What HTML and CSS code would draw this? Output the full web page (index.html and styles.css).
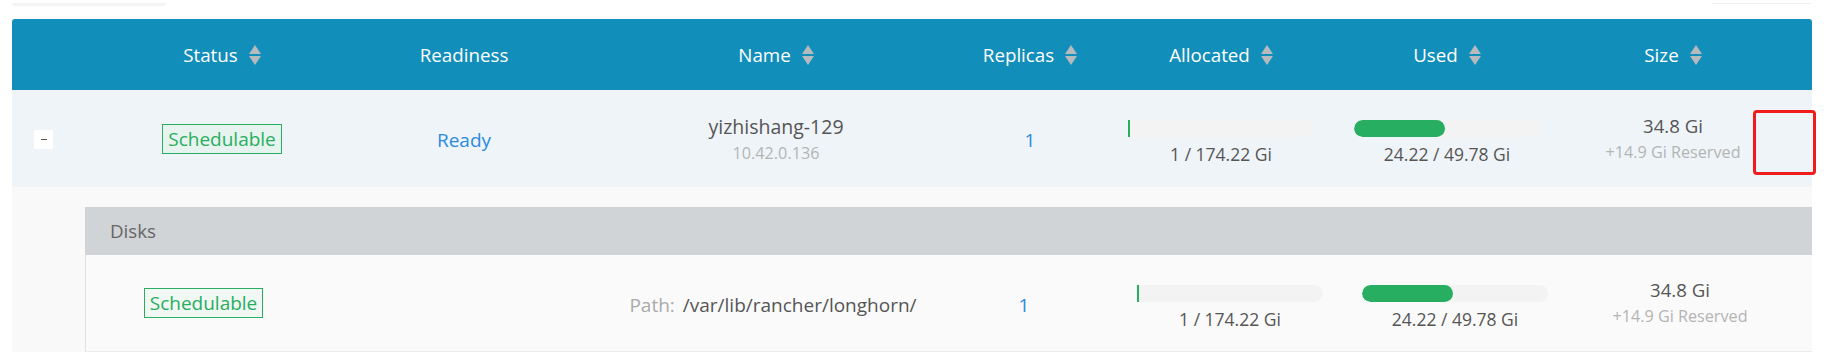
FILE: index.html
```html
<!DOCTYPE html>
<html lang="en">
<head>
<meta charset="utf-8">
<title>Nodes</title>
<link rel="stylesheet" href="styles.css">
</head>
<body>
<div class="page">
  <div class="toolbar">
    <div class="tb-left"></div>
    <div class="tb-right"></div>
  </div>

  <div class="table">
    <div class="thead">
      <div class="th"></div>
      <div class="th"><span>Status</span><i class="sort"></i></div>
      <div class="th"><span>Readiness</span></div>
      <div class="th"><span>Name</span><i class="sort"></i></div>
      <div class="th"><span>Replicas</span><i class="sort"></i></div>
      <div class="th"><span>Allocated</span><i class="sort"></i></div>
      <div class="th"><span>Used</span><i class="sort"></i></div>
      <div class="th"><span>Size</span><i class="sort"></i></div>
      <div class="th"></div>
    </div>

    <div class="row">
      <div class="cell cell-expand"><span class="expand"></span></div>
      <div class="cell"><span class="badge">Schedulable</span></div>
      <div class="cell"><span class="link">Ready</span></div>
      <div class="cell stack">
        <span class="name">yizhishang-129</span>
        <span class="sub">10.42.0.136</span>
      </div>
      <div class="cell"><span class="link">1</span></div>
      <div class="cell stack meter">
        <div class="bar bar-low"><div class="fill thin" style="width:2px"></div></div>
        <span class="num">1 / 174.22 Gi</span>
      </div>
      <div class="cell stack meter">
        <div class="bar"><div class="fill" style="width:91px"></div></div>
        <span class="num">24.22 / 49.78 Gi</span>
      </div>
      <div class="cell stack">
        <span class="size">34.8 Gi</span>
        <span class="sub">+14.9 Gi Reserved</span>
      </div>
      <div class="cell"></div>
      <div class="mark"></div>
    </div>

    <div class="expanded">
      <div class="disks">
        <div class="disks-head">Disks</div>
        <div class="disk-row">
          <div class="cell"><span class="badge">Schedulable</span></div>
          <div class="cell"></div>
          <div class="cell path"><span class="path-label">Path:</span><span class="path-value">/var/lib/rancher/longhorn/</span></div>
          <div class="cell"><span class="link">1</span></div>
          <div class="cell stack meter">
            <div class="bar bar-low"><div class="fill thin" style="width:2px"></div></div>
            <span class="num">1 / 174.22 Gi</span>
          </div>
          <div class="cell stack meter">
            <div class="bar"><div class="fill" style="width:91px"></div></div>
            <span class="num">24.22 / 49.78 Gi</span>
          </div>
          <div class="cell stack">
            <span class="size">34.8 Gi</span>
            <span class="sub">+14.9 Gi Reserved</span>
          </div>
          <div class="cell"></div>
        </div>
      </div>
    </div>
  </div>
</div>
</body>
</html>
```

FILE: styles.css
```css
* {
  box-sizing: border-box;
}

html, body {
  margin: 0;
  padding: 0;
  background: #ffffff;
}

body {
  font-family: "Open Sans", "Noto Sans", "Liberation Sans", sans-serif;
  color: #555555;
  overflow: hidden;
}

.page {
  width: 1831px;
  height: 352px;
}

/* top strip (bottom edge of the toolbar above) */
.toolbar {
  height: 19px;
  display: flex;
  justify-content: space-between;
  align-items: flex-start;
  padding: 3px 20px 0 12px;
}

.tb-left {
  width: 154px;
  height: 3px;
  background: #f4f4f4;
  border-radius: 0 0 3px 3px;
}

.tb-right {
  width: 99px;
  height: 1px;
  background: #f1f1f1;
}

.table {
  margin-left: 12px;
  width: 1800px;
}

/* header */
.thead {
  height: 71px;
  background: #128eba;
  border-radius: 3px 3px 0 0;
  display: grid;
  grid-template-columns: 103px 214px 270px 354px 154px 228px 224px 228px 1fr;
  align-items: center;
}

.th {
  display: flex;
  justify-content: center;
  align-items: center;
  gap: 11px;
  color: #ffffff;
  font-size: 18.75px;
  line-height: 26px;
  padding-top: 1px;
}

.sort {
  display: flex;
  flex-direction: column;
  align-items: center;
  gap: 2px;
  width: 12px;
}

.sort::before,
.sort::after {
  content: "";
  display: block;
  width: 0;
  height: 0;
  border-left: 6px solid transparent;
  border-right: 6px solid transparent;
}

.sort::before {
  border-bottom: 9px solid #b6babd;
}

.sort::after {
  border-top: 9px solid #b6babd;
}

/* main row */
.row {
  position: relative;
  height: 97px;
  background: #eff4f8;
  display: grid;
  grid-template-columns: 103px 214px 270px 354px 154px 228px 224px 228px 1fr;
}

.cell {
  display: flex;
  justify-content: center;
  align-items: center;
  font-size: 19px;
  line-height: 26px;
}

.cell-expand {
  justify-content: flex-start;
  padding-left: 22px;
  padding-top: 2px;
}

.expand {
  width: 19px;
  height: 19px;
  background: #ffffff;
  display: flex;
  align-items: center;
  justify-content: center;
}

.expand::before {
  content: "";
  display: block;
  width: 6px;
  height: 1px;
  background: #555555;
}

.badge {
  display: inline-block;
  height: 30px;
  line-height: 28px;
  padding: 0 5px;
  border: 1px solid #27ae60;
  color: #27ae60;
  background: #e7f3ee;
  font-size: 19px;
}

.link {
  color: #2b8be0;
  font-size: 19px;
  padding-top: 2px;
}

.stack {
  flex-direction: column;
}

.name {
  font-size: 19.5px;
  color: #555555;
  line-height: 26px;
  padding-top: 2px;
}

.sub {
  font-size: 16.2px;
  color: #b4b4b4;
  line-height: 26px;
}

.size {
  font-size: 18.6px;
  color: #555555;
  line-height: 26px;
}

.meter {
  padding-top: 9px;
  gap: 5px;
}

.bar {
  width: 186px;
  height: 17px;
  border-radius: 9px;
  background: #f3f3f3;
  overflow: hidden;
}

.bar-low {
  border-radius: 0 9px 9px 0;
}

.fill {
  height: 100%;
  background: #27ae60;
  border-radius: 9px;
}

.fill.thin {
  border-radius: 0;
}

.num {
  font-size: 17.5px;
  line-height: 24px;
  color: #555555;
}

/* red highlight box drawn over the actions area */
.mark {
  position: absolute;
  top: 20px;
  right: -4px;
  width: 63px;
  height: 65px;
  border: 3px solid #f01c1c;
  border-radius: 4px;
}

/* expanded disks area */
.expanded {
  background: #f9f9f9;
  padding: 20px 0 0 73px;
}

.disks-head {
  height: 48px;
  background: #d1d4d7;
  color: #666666;
  font-size: 18.75px;
  line-height: 48px;
  padding-left: 25px;
}

.disk-row {
  height: 97px;
  background: #fafafa;
  border-left: 1px solid #e0e0e0;
  border-bottom: 1px solid #ececec;
  display: grid;
  grid-template-columns: 235px 294px 316px 186px 226px 224px 226px 1fr;
}

.disk-row .badge {
  background: #f1f7f3;
}

.disk-row .meter {
  padding-top: 10px;
}

.disk-row .link {
  padding-top: 4px;
}

.path {
  gap: 8px;
  padding-top: 4px;
}

.path-label {
  color: #aaaaaa;
  font-size: 19px;
}

.path-value {
  color: #555555;
  font-size: 19px;
}
```
